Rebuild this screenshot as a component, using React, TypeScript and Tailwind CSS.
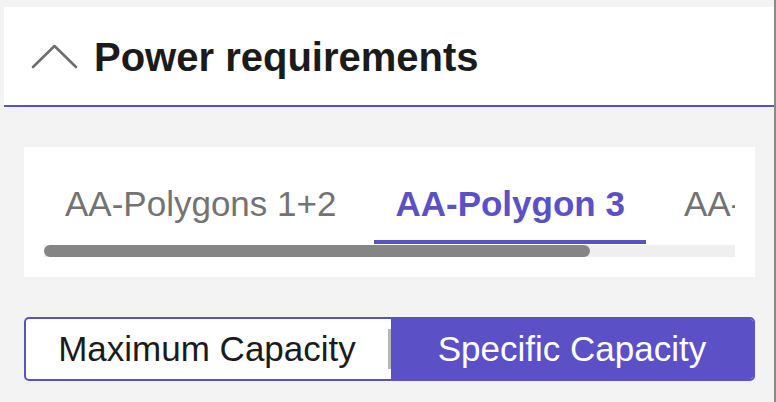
import React from 'react';

const tabs = [
  { label: 'AA-Polygons 1+2', active: false },
  { label: 'AA-Polygon 3', active: true },
  { label: 'AA-Polygon 4', active: false },
];

export default function App() {
  return (
    <div className="w-[776px] h-[402px] overflow-hidden bg-[#f3f3f3] pt-[7px] pl-[4px] border-r-2 border-[#8a8a8a] font-['Liberation_Sans',Arial,sans-serif]">
      {/* section header */}
      <div className="flex h-[100px] items-center bg-white pl-[26px] pt-[2px] border-b-2 border-[#5b50c5]">
        <svg width="48" height="28" viewBox="0 0 48 28" fill="none">
          <path d="M3 24L24.5 3L46 24" stroke="#6e6e6e" strokeWidth="2.6" strokeLinecap="round" strokeLinejoin="round" />
        </svg>
        <h2 className="ml-[16px] text-[40px] font-bold leading-[46px] text-[#1b1b1b]">Power requirements</h2>
      </div>

      <div className="pl-[20px] pr-[19px] pt-[40px]">
        {/* tabs */}
        <div className="h-[130px] bg-white px-[20px] pt-[37px]">
          <div className="overflow-hidden">
            <div className="flex gap-[17px]">
              {tabs.map((tab) => (
                <div
                  key={tab.label}
                  className={`shrink-0 whitespace-nowrap px-[21px] pb-[16px] text-[35px] leading-[40px] border-b-4 ${
                    tab.active ? 'border-[#5b50c5] font-bold text-[#5b50c5]' : 'border-transparent text-[#737373]'
                  }`}
                >
                  {tab.label}
                </div>
              ))}
            </div>
            <div className="mt-px h-[12px] bg-[#efefef]">
              <div className="h-full w-[546px] rounded-full bg-[#858585]" />
            </div>
          </div>
        </div>

        {/* capacity toggle */}
        <div className="mt-[40px] flex h-[64px] overflow-hidden rounded-[5px] border-2 border-[#5b50c5] bg-white text-[35px]">
          <div className="flex flex-1 items-center justify-center text-[#1b1b1b]">Maximum Capacity</div>
          <div className="my-[10px] w-[3px] bg-[#b5b8b0]" />
          <div className="flex flex-1 items-center justify-center bg-[#5b50c5] text-white">Specific Capacity</div>
        </div>
      </div>
    </div>
  );
}
